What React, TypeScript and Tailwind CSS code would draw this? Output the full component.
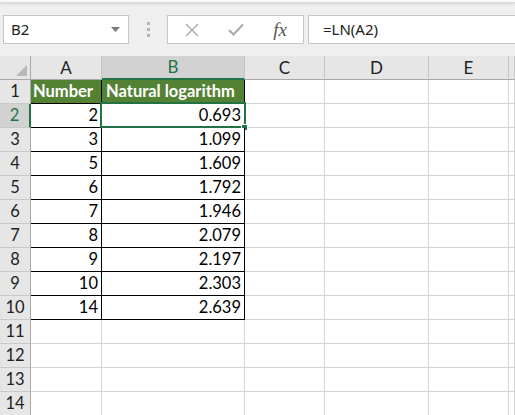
import React from "react";

const data: [string, string][] = [
  ["2", "0.693"],
  ["3", "1.099"],
  ["5", "1.609"],
  ["6", "1.792"],
  ["7", "1.946"],
  ["8", "2.079"],
  ["9", "2.197"],
  ["10", "2.303"],
  ["14", "2.639"],
];

const cellFont = { fontFamily: "Lato, 'Noto Sans', sans-serif" };

function RowHeader({ n, active }: { n: number; active?: boolean }) {
  return (
    <div
      className={
        "h-[24px] flex items-center justify-center border-b border-[#c8c8c8] text-[16.5px] " +
        (active
          ? "bg-[#d2d2d2] text-[#217346] border-r-2 border-r-[#217346]"
          : "bg-[#e6e6e6] text-[#222] border-r border-r-[#a8a8a8]")
      }
      style={cellFont}
    >
      {n}
    </div>
  );
}

function Empty() {
  return <div className="h-[24px] bg-white border-r border-b border-[#d4d4d4]" />;
}

export default function App() {
  const cols = ["A", "B", "C", "D", "E", ""];
  return (
    <div className="w-[515px] h-[415px] overflow-hidden bg-[#efefef] flex flex-col" style={{ fontFamily: "'Noto Sans', sans-serif" }}>
      {/* top strip */}
      <div className="h-[3px] bg-[#f8f8f8] border-b border-[#dcdcdc] shadow-[0_1px_3px_rgba(0,0,0,0.12)] shrink-0" />
      {/* formula bar */}
      <div className="flex items-center mt-[12px] h-[29px] shrink-0">
        <div className="ml-[3px] w-[126px] h-[29px] bg-white border border-[#c6c6c6] flex items-center justify-between pl-[7px] pr-[8px]">
          <span className="text-[15px] text-[#222]">B2</span>
          <svg width="9" height="5" viewBox="0 0 9 5">
            <path d="M0 0 H9 L4.5 5 Z" fill="#7a7a7a" />
          </svg>
        </div>
        <div className="w-[38px] flex flex-col items-center gap-[3px]">
          <div className="w-[3px] h-[3px] bg-[#b4b4b4]" />
          <div className="w-[3px] h-[3px] bg-[#b4b4b4]" />
          <div className="w-[3px] h-[3px] bg-[#b4b4b4]" />
        </div>
        <div className="w-[137px] h-[29px] bg-white border border-[#c6c6c6] flex items-center">
          <div className="w-[45px] flex justify-center ml-[1px]">
            <svg width="14" height="14" viewBox="0 0 14 14">
              <path d="M1 1 L13 13 M13 1 L1 13" stroke="#a6a6a6" strokeWidth="1.3" />
            </svg>
          </div>
          <div className="w-[44px] flex justify-center">
            <svg width="16" height="13" viewBox="0 0 16 13">
              <path d="M1 7 L5.5 11.5 L15 1.5" stroke="#adadad" strokeWidth="2.2" fill="none" />
            </svg>
          </div>
          <div className="w-[44px] flex justify-center">
            <span className="italic text-[19px] text-[#555] leading-none" style={{ fontFamily: "'Liberation Serif', serif" }}>
              fx
            </span>
          </div>
        </div>
        <div className="ml-[4px] flex-1 h-[29px] bg-white border border-[#c6c6c6] border-r-0 flex items-center pl-[14px]">
          <span className="text-[15px] text-[#222]">=LN(A2)</span>
        </div>
      </div>
      {/* sheet */}
      <div className="mt-[12px] grid grid-cols-[31px_71px_143px_80px_104px_80px_1fr] auto-rows-[24px] bg-white">
        {/* corner */}
        <div className="h-[24px] bg-[#e6e6e6] border-r border-b border-[#a8a8a8] relative">
          <svg className="absolute right-[3px] bottom-[3px]" width="11" height="11" viewBox="0 0 11 11">
            <path d="M11 0 V11 H0 Z" fill="#b8b8b8" />
          </svg>
        </div>
        {cols.map((c, i) =>
          c === "B" ? (
            <div
              key={i}
              className="h-[24px] bg-[#d2d2d2] border-r border-r-[#c6c6c6] border-b-2 border-b-[#217346] flex items-center justify-center text-[17px] text-[#217346]"
              style={cellFont}
            >
              {c}
            </div>
          ) : (
            <div
              key={i}
              className="h-[24px] bg-[#e6e6e6] border-r border-r-[#c6c6c6] border-b border-b-[#a8a8a8] flex items-center justify-center text-[17px] text-[#222]"
              style={cellFont}
            >
              {c}
            </div>
          )
        )}
        {/* row 1 */}
        <RowHeader n={1} />
        <div className="h-[24px] bg-[#548235] border-r border-b border-black flex items-center pl-[2px] text-white font-bold text-[16.5px] whitespace-nowrap" style={cellFont}>
          Number
        </div>
        <div className="h-[24px] bg-[#548235] border-r border-b border-black flex items-center pl-[4px] text-white font-bold text-[16.5px] whitespace-nowrap" style={cellFont}>
          Natural logarithm
        </div>
        <Empty />
        <Empty />
        <Empty />
        <Empty />
        {data.map(([a, b], idx) => {
          const rowNum = idx + 2;
          const active = rowNum === 2;
          return (
            <React.Fragment key={rowNum}>
              <RowHeader n={rowNum} active={active} />
              <div className="h-[24px] bg-white border-r border-b border-black flex items-center justify-end pr-[3px] text-[16.5px] text-black" style={cellFont}>
                {a}
              </div>
              <div className="h-[24px] bg-white border-r border-b border-black flex items-center justify-end pr-[3px] text-[16.5px] text-black relative" style={cellFont}>
                {b}
                {active && (
                  <>
                    <div className="absolute -left-[2px] -top-[2px] -right-[2px] -bottom-[1px] border-2 border-[#217346] pointer-events-none" />
                    <div className="absolute -right-[4px] -bottom-[4px] w-[7px] h-[7px] bg-[#217346] border border-white" />
                  </>
                )}
              </div>
              <Empty />
              <Empty />
              <Empty />
              <Empty />
            </React.Fragment>
          );
        })}
        {[11, 12, 13, 14].map((n) => (
          <React.Fragment key={n}>
            <RowHeader n={n} />
            <Empty />
            <Empty />
            <Empty />
            <Empty />
            <Empty />
            <Empty />
          </React.Fragment>
        ))}
      </div>
    </div>
  );
}
